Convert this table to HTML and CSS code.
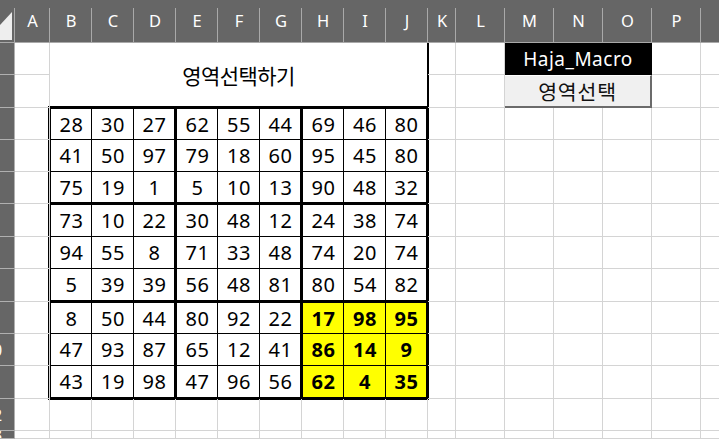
FILE: index.html
```html
<!DOCTYPE html>
<html lang="ko">
<head>
<meta charset="utf-8">
<title>영역선택하기</title>
<link rel="stylesheet" href="styles.css">
</head>
<body>
<div class="sheet">
  <!-- column headers -->
  <div class="col-h corner"><svg class="corner-tri" width="14" height="42" viewBox="0 0 14 42"><polygon points="12,12 12,40 0,40 0,25" fill="#eeeeee"/></svg></div>
  <div class="col-h">A</div>
  <div class="col-h">B</div>
  <div class="col-h">C</div>
  <div class="col-h">D</div>
  <div class="col-h">E</div>
  <div class="col-h">F</div>
  <div class="col-h">G</div>
  <div class="col-h">H</div>
  <div class="col-h">I</div>
  <div class="col-h">J</div>
  <div class="col-h">K</div>
  <div class="col-h">L</div>
  <div class="col-h">M</div>
  <div class="col-h">N</div>
  <div class="col-h">O</div>
  <div class="col-h">P</div>
  <div class="col-h">Q</div>

  <!-- block placed over B1:J11 -->
  <div class="board">
    <div class="title">영역선택하기</div>
    <div class="data">
      <div class="n">28</div><div class="n">30</div><div class="n">27</div><div class="n">62</div><div class="n">55</div><div class="n">44</div><div class="n">69</div><div class="n">46</div><div class="n">80</div>
      <div class="n">41</div><div class="n">50</div><div class="n">97</div><div class="n">79</div><div class="n">18</div><div class="n">60</div><div class="n">95</div><div class="n">45</div><div class="n">80</div>
      <div class="n">75</div><div class="n">19</div><div class="n">1</div><div class="n">5</div><div class="n">10</div><div class="n">13</div><div class="n">90</div><div class="n">48</div><div class="n">32</div>
      <div class="n">73</div><div class="n">10</div><div class="n">22</div><div class="n">30</div><div class="n">48</div><div class="n">12</div><div class="n">24</div><div class="n">38</div><div class="n">74</div>
      <div class="n">94</div><div class="n">55</div><div class="n">8</div><div class="n">71</div><div class="n">33</div><div class="n">48</div><div class="n">74</div><div class="n">20</div><div class="n">74</div>
      <div class="n">5</div><div class="n">39</div><div class="n">39</div><div class="n">56</div><div class="n">48</div><div class="n">81</div><div class="n">80</div><div class="n">54</div><div class="n">82</div>
      <div class="n">8</div><div class="n">50</div><div class="n">44</div><div class="n">80</div><div class="n">92</div><div class="n">22</div><div class="n hl">17</div><div class="n hl">98</div><div class="n hl">95</div>
      <div class="n">47</div><div class="n">93</div><div class="n">87</div><div class="n">65</div><div class="n">12</div><div class="n">41</div><div class="n hl">86</div><div class="n hl">14</div><div class="n hl">9</div>
      <div class="n">43</div><div class="n">19</div><div class="n">98</div><div class="n">47</div><div class="n">96</div><div class="n">56</div><div class="n hl">62</div><div class="n hl">4</div><div class="n hl">35</div>
    </div>
  </div>

  <div class="btn-macro">Haja_Macro</div>
  <button class="btn-select" type="button">영역선택</button>

  <!-- row 1 -->
  <div class="rh"><span>1</span></div><div class="c"></div>
  <div class="c"></div><div class="c"></div><div class="c"></div><div class="c"></div>
  <!-- row 2 -->
  <div class="rh"><span>2</span></div><div class="c"></div>
  <div class="c"></div><div class="c"></div><div class="c"></div><div class="c"></div>
  <!-- rows 3-11 -->
  <div class="rh"><span>3</span></div><div class="c"></div>
  <div class="c"></div><div class="c"></div><div class="c"></div><div class="c"></div><div class="c"></div><div class="c"></div><div class="c"></div>
  <div class="rh"><span>4</span></div><div class="c"></div>
  <div class="c"></div><div class="c"></div><div class="c"></div><div class="c"></div><div class="c"></div><div class="c"></div><div class="c"></div>
  <div class="rh"><span>5</span></div><div class="c"></div>
  <div class="c"></div><div class="c"></div><div class="c"></div><div class="c"></div><div class="c"></div><div class="c"></div><div class="c"></div>
  <div class="rh"><span>6</span></div><div class="c"></div>
  <div class="c"></div><div class="c"></div><div class="c"></div><div class="c"></div><div class="c"></div><div class="c"></div><div class="c"></div>
  <div class="rh"><span>7</span></div><div class="c"></div>
  <div class="c"></div><div class="c"></div><div class="c"></div><div class="c"></div><div class="c"></div><div class="c"></div><div class="c"></div>
  <div class="rh"><span>8</span></div><div class="c"></div>
  <div class="c"></div><div class="c"></div><div class="c"></div><div class="c"></div><div class="c"></div><div class="c"></div><div class="c"></div>
  <div class="rh"><span>9</span></div><div class="c"></div>
  <div class="c"></div><div class="c"></div><div class="c"></div><div class="c"></div><div class="c"></div><div class="c"></div><div class="c"></div>
  <div class="rh"><span>10</span></div><div class="c"></div>
  <div class="c"></div><div class="c"></div><div class="c"></div><div class="c"></div><div class="c"></div><div class="c"></div><div class="c"></div>
  <div class="rh"><span>11</span></div><div class="c"></div>
  <div class="c"></div><div class="c"></div><div class="c"></div><div class="c"></div><div class="c"></div><div class="c"></div><div class="c"></div>
  <!-- row 12 -->
  <div class="rh"><span>12</span></div><div class="c"></div>
  <div class="c"></div><div class="c"></div><div class="c"></div><div class="c"></div><div class="c"></div><div class="c"></div><div class="c"></div><div class="c"></div><div class="c"></div>
  <div class="c"></div><div class="c"></div><div class="c"></div><div class="c"></div><div class="c"></div><div class="c"></div><div class="c"></div>
  <!-- row 13 -->
  <div class="rh"><span>13</span></div><div class="c"></div>
  <div class="c"></div><div class="c"></div><div class="c"></div><div class="c"></div><div class="c"></div><div class="c"></div><div class="c"></div><div class="c"></div><div class="c"></div>
  <div class="c"></div><div class="c"></div><div class="c"></div><div class="c"></div><div class="c"></div><div class="c"></div><div class="c"></div>
</div>
</body>
</html>
```

FILE: styles.css
```css
* { box-sizing: border-box; }

html, body {
  margin: 0;
  background: #ffffff;
  overflow: hidden;
}

body {
  font-family: "Noto Sans", "Noto Sans CJK KR", sans-serif;
  color: #000;
}

.sheet {
  display: grid;
  grid-template-columns: 15px 35px repeat(9, 42px) 28px repeat(6, 49px);
  grid-template-rows: 43px 32px 33px 32px 32px 32px 33px 32px 33px 32px 32px 33px 32px 8px;
  width: 750px;
}

/* column headers */
.col-h {
  background: linear-gradient(#a9a9a9, #a9a9a9) right bottom / 1px 34px no-repeat, #666666;
  border-bottom: 1px solid #a9a9a9;
  color: #ffffff;
  font-family: "Noto Sans", sans-serif;
  font-size: 16.5px;
  display: flex;
  align-items: center;
  justify-content: center;
  padding-bottom: 1px;
}

.corner {
  display: block;
  padding: 0;
}

.corner-tri {
  display: block;
}

/* row headers */
.rh {
  background: #666666;
  border-right: 1px solid #b0b0b0;
  border-bottom: 1px solid #b0b0b0;
  display: flex;
  justify-content: flex-end;
  align-items: center;
  overflow: hidden;
  color: #ffffff;
  font-family: "Noto Sans", sans-serif;
  font-size: 16px;
}

.rh span {
  flex: none;
  width: 42px;
  text-align: center;
}

/* plain cells */
.c {
  border-right: 1px solid #d4d4d4;
  border-bottom: 1px solid #d4d4d4;
}

/* board over B1:J11 */
.board {
  grid-column: 3 / 12;
  grid-row: 2 / 13;
  margin: 0 -1px -1px -2px;
  display: flex;
  flex-direction: column;
  background: #ffffff;
}

.title {
  height: 63px;
  margin-left: 1px;
  border-left: 1px solid #000;
  border-right: 2px solid #000;
  display: flex;
  align-items: center;
  justify-content: center;
  font-family: "Noto Sans CJK KR", sans-serif;
  font-size: 21px;
  letter-spacing: -0.6px;
  padding-top: 1px;
}

.data {
  background: #000;
  padding: 3px;
  display: grid;
  grid-template-columns: 40px 41px 42px 40px 41px 42px 40px 41px 40px;
  grid-template-rows: 30px 31px 32px 31px 31px 33px 30px 31px 31px;
  gap: 1px;
}

.n {
  background: #ffffff;
  display: flex;
  align-items: center;
  justify-content: center;
  font-family: "Noto Sans", sans-serif;
  font-size: 20px;
  letter-spacing: 0.6px;
  padding-left: 1px;
}

.n:nth-child(9n+3),
.n:nth-child(9n+6) {
  border-right: 2px solid #000;
}

.n:nth-child(n+19):nth-child(-n+27),
.n:nth-child(n+46):nth-child(-n+54) {
  border-bottom: 2px solid #000;
}

.n.hl {
  background: #ffff00;
  font-weight: 700;
}

/* macro shapes over M1:O2 */
.btn-macro {
  grid-column: 14 / 17;
  grid-row: 2;
  margin-left: -1px;
  background: #000;
  color: #fff;
  display: flex;
  align-items: center;
  justify-content: center;
  font-family: "Noto Sans", sans-serif;
  font-size: 19px;
  letter-spacing: 0.5px;
  padding-bottom: 1px;
}

.btn-select {
  grid-column: 14 / 17;
  grid-row: 3;
  margin: 0 0 0 -1px;
  padding: 0 0 1px 0;
  background: #f0f0f0;
  border-style: solid;
  border-width: 1px 2px 2px 1px;
  border-color: #ffffff #6b6b6b #6b6b6b #e3e3e3;
  color: #111;
  font-family: "Noto Sans CJK KR", sans-serif;
  font-size: 20.5px;
  letter-spacing: 0.8px;
}
```
